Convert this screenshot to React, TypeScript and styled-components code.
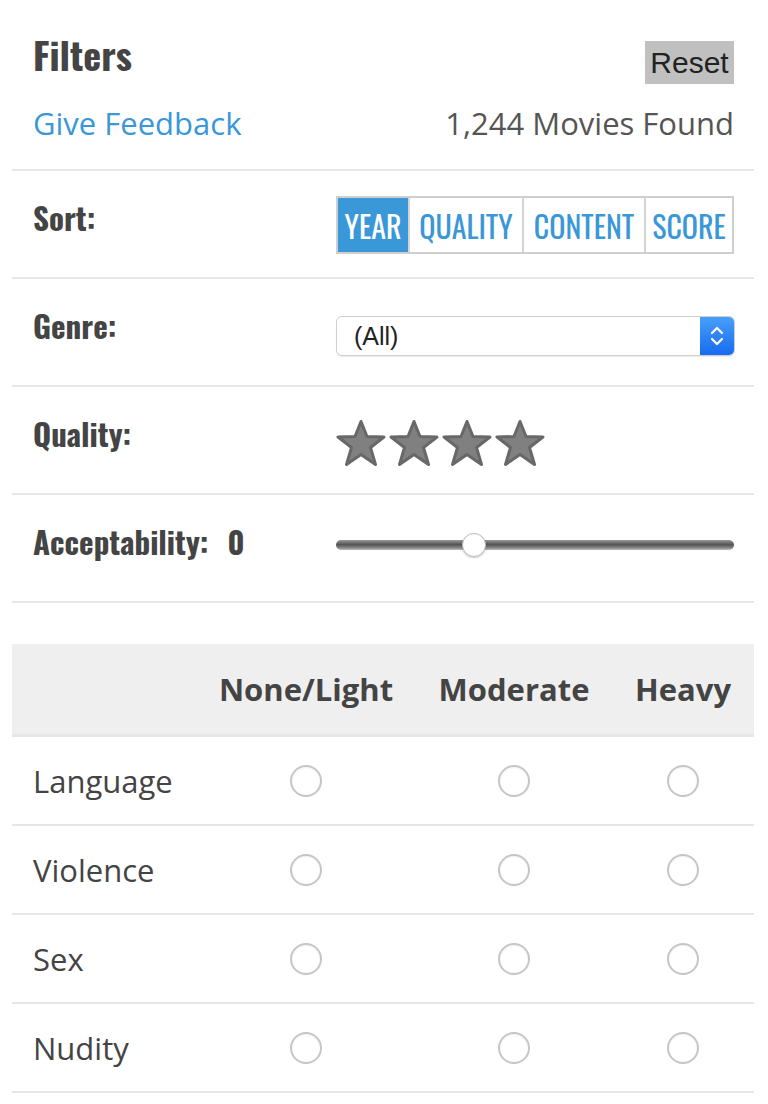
import React from "react";
import styled, { createGlobalStyle } from "styled-components";

const Global = createGlobalStyle`
  html, body { margin: 0; padding: 0; background: #fff; }
  body { font-family: "Open Sans", "Liberation Sans", sans-serif; color: #444; }
`;

const CONDENSED = `"Oswald", "Liberation Sans Narrow", "DejaVu Sans Condensed", "Roboto Condensed", sans-serif`;

const Page = styled.div`
  margin: 0 14px 0 12px;
  width: 742px;
  padding-bottom: 14px;
`;

const Head = styled.div`
  padding: 28px 20px 0 21px;
  border-bottom: 2px solid #e6e6e6;
  box-sizing: border-box;
  height: 171px;
`;

const HeadRow = styled.div<{ $align?: string; $top?: number }>`
  display: flex;
  justify-content: space-between;
  align-items: ${(p) => p.$align || "center"};
  margin-top: ${(p) => p.$top || 0}px;
`;

const Title = styled.h1`
  margin: 0;
  font-family: ${CONDENSED};
  font-weight: 700;
  font-size: 38px;
  line-height: 52px;
  color: #444;
`;

const ResetBtn = styled.button`
  margin-top: 13px;
  background: #c0c0c0;
  border: none;
  border-radius: 0;
  font-family: "Liberation Sans", Arial, sans-serif;
  font-size: 30px;
  color: #222;
  height: 43px;
  width: 89px;
  padding: 0;
`;

const FeedbackLink = styled.a`
  font-size: 31px;
  color: #3a97d8;
  text-decoration: none;
  line-height: 42px;
`;

const Count = styled.span`
  font-size: 31px;
  color: #555;
  line-height: 42px;
`;

const FilterRow = styled.div`
  display: grid;
  grid-template-columns: 303px 1fr;
  align-items: start;
  height: 108px;
  box-sizing: border-box;
  padding: 24px 20px 0 21px;
  border-bottom: 2px solid #e6e6e6;
`;

const Label = styled.div`
  font-family: ${CONDENSED};
  font-weight: 700;
  font-size: 31px;
  line-height: 44px;
  color: #444;
  white-space: nowrap;
`;

const LabelValue = styled.span`
  margin-left: 19px;
`;

const Control = styled.div<{ $top: number }>`
  margin-top: ${(p) => p.$top}px;
  display: flex;
  align-items: center;
`;

const Segmented = styled.div`
  display: flex;
  border: 2px solid #cfcfcf;
  height: 58px;
  box-sizing: border-box;
  width: 398px;
`;

const SegButton = styled.button<{ $active?: boolean; $w: number }>`
  width: ${(p) => p.$w}px;
  border: none;
  border-left: 2px solid ${(p) => (p.$active ? "#3a97d8" : "#d4d4d4")};
  &:first-child { border-left: none; }
  background: ${(p) => (p.$active ? "#3a97d8" : "#fff")};
  color: ${(p) => (p.$active ? "#fff" : "#3a97d8")};
  font-family: ${CONDENSED};
  font-weight: 400;
  font-size: 30px;
  padding: 0;
  text-align: center;
`;

const Select = styled.div`
  width: 399px;
  height: 40px;
  box-sizing: border-box;
  border: 1px solid #cfcfcf;
  border-radius: 6px;
  display: flex;
  align-items: center;
  justify-content: space-between;
  overflow: hidden;
  background: #fff;
  box-shadow: 0 1px 1px rgba(0, 0, 0, 0.08);
`;

const SelectText = styled.span`
  font-family: "Liberation Sans", Arial, sans-serif;
  font-size: 25px;
  color: #222;
  padding-left: 17px;
`;

const Stepper = styled.div`
  width: 34px;
  height: 40px;
  background: linear-gradient(#4aa0fb, #1769ef);
  display: flex;
  align-items: center;
  justify-content: center;
`;

const Stars = styled.div`
  display: flex;
  gap: 3px;
`;

const SliderWrap = styled.div`
  position: relative;
  width: 398px;
  height: 24px;
  display: flex;
  align-items: center;
`;

const Track = styled.div`
  width: 100%;
  height: 10px;
  border-radius: 5px;
  background: linear-gradient(#999, #555 45%, #777 70%, #bbb);
`;

const Thumb = styled.div`
  position: absolute;
  left: 126px;
  top: 0;
  width: 22px;
  height: 22px;
  border-radius: 50%;
  background: #fff;
  border: 1px solid #bbb;
  box-shadow: 0 1px 2px rgba(0, 0, 0, 0.2);
`;

const Table = styled.div`
  margin-top: 41px;
`;

const GRID = "184px 220px 196px 142px";

const TableHead = styled.div`
  display: grid;
  grid-template-columns: ${GRID};
  align-items: center;
  height: 93px;
  box-sizing: border-box;
  background: #efefef;
  border-bottom: 3px solid #e6e6e6;
`;

const HeadCell = styled.div`
  font-weight: 700;
  font-size: 31px;
  color: #444;
  text-align: center;
  white-space: nowrap;
`;

const TRow = styled.div`
  display: grid;
  grid-template-columns: ${GRID};
  align-items: center;
  height: 89px;
  box-sizing: border-box;
  border-bottom: 2px solid #e6e6e6;
`;

const RowLabel = styled.div`
  font-size: 31px;
  color: #444;
  padding-left: 21px;
`;

const Radio = styled.span`
  justify-self: center;
  width: 32px;
  height: 32px;
  border-radius: 50%;
  box-sizing: border-box;
  border: 2px solid #c6c6c6;
  background: #fff;
  box-shadow: inset 0 1px 2px rgba(0, 0, 0, 0.06);
`;

const Star = () => (
  <svg width="50" height="48" viewBox="0 0 50 48">
    <polygon
      points="25,2.5 31,17.5 48,18 34.5,28.5 39.5,45.5 25,35.5 10.5,45.5 15.5,28.5 2,18 19,17.5"
      fill="#808080"
      stroke="#686868"
      strokeWidth="3"
      strokeLinejoin="round"
    />
  </svg>
);

const Chevrons = () => (
  <svg width="16" height="26" viewBox="0 0 16 26">
    <path d="M3 10 L8 5 L13 10" fill="none" stroke="#fff" strokeWidth="2.2" strokeLinecap="round" strokeLinejoin="round" />
    <path d="M3 16 L8 21 L13 16" fill="none" stroke="#fff" strokeWidth="2.2" strokeLinecap="round" strokeLinejoin="round" />
  </svg>
);

const sortOptions = [
  { label: "YEAR", w: 70, active: true },
  { label: "QUALITY", w: 114 },
  { label: "CONTENT", w: 122 },
  { label: "SCORE", w: 88 },
];

const categories = ["Language", "Violence", "Sex", "Nudity"];

export default function App() {
  return (
    <>
      <Global />
      <Page>
        <Head>
          <HeadRow $align="flex-start">
            <Title>Filters</Title>
            <ResetBtn>Reset</ResetBtn>
          </HeadRow>
          <HeadRow $top={18}>
            <FeedbackLink href="#">Give Feedback</FeedbackLink>
            <Count>1,244 Movies Found</Count>
          </HeadRow>
        </Head>

        <FilterRow>
          <Label>Sort:</Label>
          <Control $top={1}>
            <Segmented>
              {sortOptions.map((o) => (
                <SegButton key={o.label} $active={o.active} $w={o.w}>
                  {o.label}
                </SegButton>
              ))}
            </Segmented>
          </Control>
        </FilterRow>

        <FilterRow>
          <Label>Genre:</Label>
          <Control $top={13}>
            <Select>
              <SelectText>(All)</SelectText>
              <Stepper>
                <Chevrons />
              </Stepper>
            </Select>
          </Control>
        </FilterRow>

        <FilterRow>
          <Label>Quality:</Label>
          <Control $top={8}>
            <Stars>
              <Star />
              <Star />
              <Star />
              <Star />
            </Stars>
          </Control>
        </FilterRow>

        <FilterRow>
          <Label>
            Acceptability:<LabelValue>0</LabelValue>
          </Label>
          <Control $top={14}>
            <SliderWrap>
              <Track />
              <Thumb />
            </SliderWrap>
          </Control>
        </FilterRow>

        <Table>
          <TableHead>
            <div />
            <HeadCell>None/Light</HeadCell>
            <HeadCell>Moderate</HeadCell>
            <HeadCell>Heavy</HeadCell>
          </TableHead>
          {categories.map((c) => (
            <TRow key={c}>
              <RowLabel>{c}</RowLabel>
              <Radio />
              <Radio />
              <Radio />
            </TRow>
          ))}
        </Table>
      </Page>
    </>
  );
}
